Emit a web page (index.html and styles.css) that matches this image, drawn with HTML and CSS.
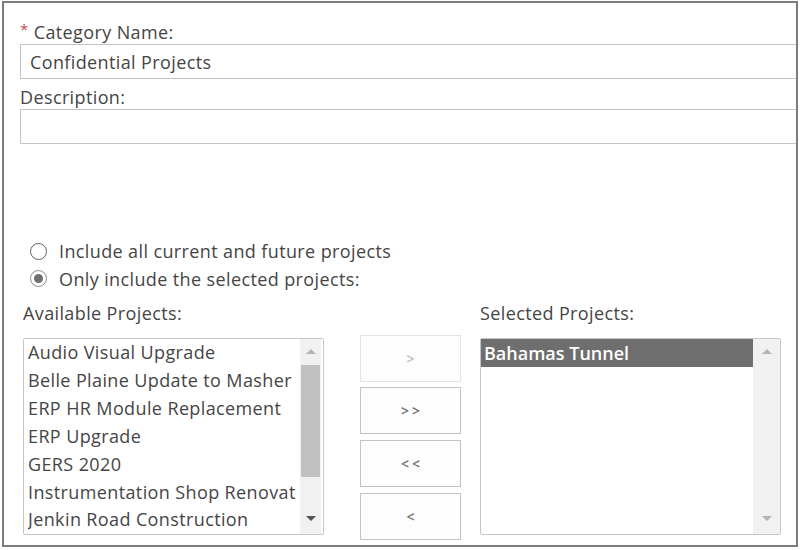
FILE: index.html
```html
<!DOCTYPE html>
<html>
<head>
<meta charset="utf-8">
<link rel="stylesheet" href="styles.css">
</head>
<body>
<div class="frame">
  <div class="lbl first"><span class="req">*</span> Category Name:</div>
  <div class="input">Confidential Projects</div>
  <div class="lbl desc">Description:</div>
  <div class="input input2"></div>

  <div class="radios">
    <div class="radio-row"><span class="radio"></span><span>Include all current and future projects</span></div>
    <div class="radio-row"><span class="radio checked"></span><span>Only include the selected projects:</span></div>
  </div>

  <div class="pickers">
    <div class="plabel">Available Projects:</div>
    <div></div>
    <div class="plabel">Selected Projects:</div>

    <div class="listbox">
      <div class="items">
        <div class="item">Audio Visual Upgrade</div>
        <div class="item">Belle Plaine Update to Masher</div>
        <div class="item">ERP HR Module Replacement</div>
        <div class="item">ERP Upgrade</div>
        <div class="item">GERS 2020</div>
        <div class="item">Instrumentation Shop Renovat</div>
        <div class="item">Jenkin Road Construction</div>
      </div>
      <div class="sbar">
        <div class="arrow up light"></div>
        <div class="thumb"></div>
        <div class="arrow down"></div>
      </div>
    </div>

    <div class="buttons">
      <div class="btn disabled">&gt;</div>
      <div class="btn">&gt;&gt;</div>
      <div class="btn">&lt;&lt;</div>
      <div class="btn">&lt;</div>
    </div>

    <div class="listbox right">
      <div class="items">
        <div class="item selected">Bahamas Tunnel</div>
      </div>
      <div class="sbar wide">
        <div class="arrow up light"></div>
        <div class="track"></div>
        <div class="arrow down light"></div>
      </div>
    </div>
  </div>
</div>
</body>
</html>
```

FILE: styles.css
```css
html, body {
  margin: 0;
  padding: 0;
  background: #ffffff;
}
body {
  font-family: "Open Sans", "Noto Sans", "DejaVu Sans", sans-serif;
  font-size: 18px;
  letter-spacing: 0.38px;
  color: #454545;
}
.frame {
  box-sizing: border-box;
  margin: 1px 0 0 2px;
  width: 796px;
  height: 546px;
  border: 2px solid #7c7c7c;
  overflow: hidden;
  padding: 15px 0 0 16px;
}
.lbl {
  line-height: 22px;
  height: 22px;
}
.req {
  color: #c0504d;
  font-size: 15px;
  vertical-align: 4px;
}
.input {
  box-sizing: border-box;
  margin-top: 3.5px;
  width: 800px;
  height: 35px;
  border: 1px solid #c4c4c4;
  padding: 4.5px 0 0 9px;
  line-height: 27.6px;
  color: #454545;
}
.desc {
  margin-top: 7.5px;
}
.input2 {
  margin-top: 1px;
}
.radios {
  margin-top: 96px;
  padding-left: 10px;
  display: flex;
  flex-direction: column;
  gap: 5.5px;
}
.radio-row {
  display: flex;
  align-items: center;
  height: 22px;
  line-height: 22px;
}
.radio {
  box-sizing: border-box;
  width: 17px;
  height: 17px;
  border-radius: 50%;
  border: 1px solid #5f5f5f;
  background: #fff;
  margin-right: 12px;
  flex: none;
  position: relative;
}
.radio.checked {
  border-color: #8a8a8a;
}
.radio.checked::after {
  content: "";
  position: absolute;
  left: 3px;
  top: 3px;
  width: 9px;
  height: 9px;
  border-radius: 50%;
  background: #6f6f6f;
}
.pickers {
  display: grid;
  grid-template-columns: 301px 156px 301px;
  grid-template-rows: 22px auto;
  row-gap: 13.5px;
  margin-left: 3px;
  margin-top: 12.5px;
}
.plabel {
  line-height: 22px;
}
.listbox {
  box-sizing: border-box;
  height: 197px;
  border: 1px solid #c6c6c6;
  border-radius: 2px;
  display: flex;
}
.items {
  flex: 1;
  min-width: 0;
  padding-left: 4px;
  padding-top: 0.6px;
}
.item {
  line-height: 27.9px;
  height: 27.9px;
  white-space: nowrap;
  overflow: hidden;
  color: #454545;
}
.right .items {
  padding-left: 0;
  padding-top: 0;
}
.item.selected {
  background: #6e6e6e;
  color: #ffffff;
  font-weight: 600;
  letter-spacing: 0;
  padding-left: 3px;
  height: 28px;
  line-height: 28px;
}
.sbar {
  width: 21px;
  margin-right: 2px;
  background: #f1f1f1;
  display: flex;
  flex-direction: column;
  align-items: center;
}
.sbar.wide {
  width: 27px;
  margin-right: 0;
}
.arrow {
  flex: none;
  height: 26px;
  width: 100%;
  position: relative;
}
.arrow::after {
  content: "";
  position: absolute;
  left: 50%;
  top: 50%;
  width: 0;
  height: 0;
  margin-left: -5px;
  margin-top: -3px;
  border-left: 5px solid transparent;
  border-right: 5px solid transparent;
}
.arrow.up::after {
  border-bottom: 5px solid #555555;
}
.arrow.down::after {
  border-top: 5px solid #555555;
}
.arrow.up.light::after {
  border-bottom-color: #b4b4b4;
}
.arrow.down.light::after {
  border-top-color: #b4b4b4;
}
.sbar .down {
  margin-top: auto;
  height: 30px;
}
.thumb {
  width: 19px;
  height: 112px;
  background: #c1c1c1;
}
.buttons {
  padding-left: 36px;
  padding-right: 19px;
  margin-top: -3px;
  display: flex;
  flex-direction: column;
  gap: 5.7px;
}
.btn {
  box-sizing: border-box;
  width: 101px;
  height: 47px;
  border: 1px solid #c3c3c3;
  background: #fdfdfd;
  display: flex;
  align-items: center;
  justify-content: center;
  font-size: 14px;
  font-weight: 600;
  letter-spacing: 3px;
  text-indent: 3px;
  color: #6f6f6f;
}
.btn.disabled {
  border-color: #e3e3e3;
  color: #bcbcbc;
}
```
